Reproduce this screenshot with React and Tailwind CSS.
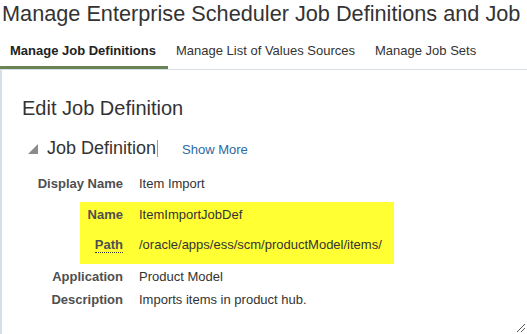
export default function App() {
  const font = { fontFamily: '"Liberation Sans", Arial, sans-serif' };
  return (
    <div className="w-[527px] h-[334px] bg-white overflow-hidden relative" style={font}>
      <h1 className="text-[21.7px] leading-[28px] text-[#333] pl-[2px] pb-[1px] whitespace-nowrap overflow-hidden">
        Manage Enterprise Scheduler Job Definitions and Job Sets
      </h1>
      <div className="flex h-[41px] border-b border-[#d6dfe6] text-[13px] text-[#333]">
        <div className="w-[168px] pl-[10px] pt-[12px] font-bold text-[#222] border-b-[3px] border-[#6b8456] whitespace-nowrap">
          Manage Job Definitions
        </div>
        <div className="pl-[8px] pt-[12px] whitespace-nowrap">Manage List of Values Sources</div>
        <div className="pl-[20px] pt-[12px] whitespace-nowrap">Manage Job Sets</div>
      </div>
      <div className="border-l-2 border-[#d6dfe6] h-[265px] pl-[20px] pt-[26px] text-[#333]">
        <div className="text-[20px] leading-[24px]">Edit Job Definition</div>
        <div className="flex items-center mt-[17px] pl-[6px]">
          <svg width="10" height="10" viewBox="0 0 10 10" className="mr-[9px] mt-[2px]">
            <polygon points="10,0 10,10 0,10" fill="#8c8c8c" />
          </svg>
          <span className="text-[18px] leading-[22px] text-[#333]">Job Definition</span>
          <span className="w-px h-[17px] bg-[#999] ml-[1px]"></span>
          <span className="text-[13px] text-[#2b6aa3] ml-[24px] mt-[3px]">Show More</span>
        </div>
        <div className="mt-[16px] text-[13px] leading-[16px]">
          <div className="flex items-center h-[17px]">
            <div className="w-[101px] text-right font-bold text-[#4f4f4f]">Display Name</div>
            <div className="ml-[16px] text-[#333]">Item Import</div>
          </div>
          <div className="ml-[58px] mt-[9px] w-[314px] h-[62px] bg-[#ffff33] flex flex-col pt-[5px] gap-[13px]">
            <div className="flex items-center h-[17px]">
              <div className="w-[43px] text-right font-bold text-[#4f4f4f]">Name</div>
              <div className="ml-[16px] text-[#333]">ItemImportJobDef</div>
            </div>
            <div className="flex items-center h-[17px]">
              <div className="w-[43px] text-right font-bold text-[#4f4f4f]">
                <span className="border-b border-dotted border-[#333]">Path</span>
              </div>
              <div className="ml-[16px] text-[#333]">/oracle/apps/ess/scm/productModel/items/</div>
            </div>
          </div>
          <div className="flex items-center h-[17px] mt-[5px]">
            <div className="w-[101px] text-right font-bold text-[#4f4f4f]">Application</div>
            <div className="ml-[16px] text-[#333]">Product Model</div>
          </div>
          <div className="flex items-center h-[17px] mt-[6px]">
            <div className="w-[101px] text-right font-bold text-[#4f4f4f]">Description</div>
            <div className="ml-[16px] text-[#333]">Imports items in product hub.</div>
          </div>
        </div>
      </div>
      <svg width="9" height="9" viewBox="0 0 9 9" className="absolute right-[2px] bottom-[2px]">
        <line x1="9" y1="1" x2="1" y2="9" stroke="#555" strokeWidth="1" />
        <line x1="9" y1="5" x2="5" y2="9" stroke="#555" strokeWidth="1" />
      </svg>
    </div>
  );
}
